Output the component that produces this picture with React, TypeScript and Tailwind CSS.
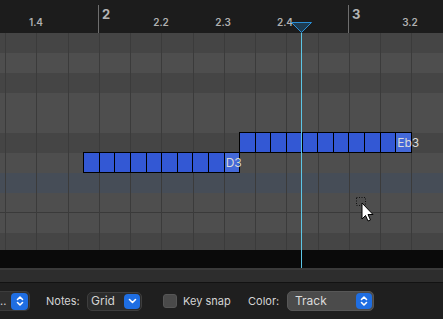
import React from 'react';

const rows = [
	{ h: 20, bg: 'bg-[#454545]' },
	{ h: 20, bg: 'bg-[#4e4e4e]' },
	{ h: 20, bg: 'bg-[#454545]' },
	{ h: 20, bg: 'bg-[#4e4e4e]' },
	{ h: 20, bg: 'bg-[#4e4e4e]' },
	{ h: 20, bg: 'bg-[#454545]' },
	{ h: 20, bg: 'bg-[#4e4e4e]' },
	{ h: 20, bg: 'bg-[#464d57]' },
	{ h: 20, bg: 'bg-[#4e4e4e] border-b border-[#3a3a3a]' },
	{ h: 20, bg: 'bg-[#4e4e4e]' },
	{ h: 17, bg: 'bg-[#454545]' },
];

const gridLines = Array.from({ length: 15 }, (_, i) => 5 + i * 31.25);
const step = 15.625;

const rulerLabels = [
	{ x: 36, t: '1.4' },
	{ x: 161, t: '2.2' },
	{ x: 223, t: '2.3' },
	{ x: 285, t: '2.4' },
	{ x: 410, t: '3.2' },
];

function Note({ start, count, top, label }: { start: number; count: number; top: number; label: string }) {
	return (
		<>
			{Array.from({ length: count }, (_, i) => (
				<div
					key={i}
					className={`absolute h-[21px] border border-black ${i === count - 1 ? 'bg-[#4469d8]' : 'bg-[#3358d4]'}`}
					style={{ left: start + i * step, top, width: step + 1 }}
				/>
			))}
			<span
				className="absolute text-[12px] leading-none text-[#dadada]"
				style={{ left: start + (count - 1) * step + 2, top: top + 5 }}
			>
				{label}
			</span>
		</>
	);
}

function Stepper({ className }: { className: string }) {
	return (
		<div className={`flex items-center justify-center rounded-[4px] bg-[#1f6ee2] ${className}`}>
			<svg width="8" height="12" viewBox="0 0 8 12" fill="none" stroke="white" strokeWidth="1.6" strokeLinecap="round" strokeLinejoin="round">
				<path d="M1.5 4.5 L4 2 L6.5 4.5" />
				<path d="M1.5 7.5 L4 10 L6.5 7.5" />
			</svg>
		</div>
	);
}

export default function App() {
	return (
		<div className="w-[443px] h-[319px] flex flex-col bg-[#1c1c1c] overflow-hidden" style={{ fontFamily: 'Inter, "Liberation Sans", sans-serif' }}>
			{/* ruler */}
			<div className="relative h-[33px] shrink-0 bg-[#1c1c1c]">
				<div className="absolute left-[98px] top-[5px] bottom-0 w-px bg-[#6e6e6e]" />
				<div className="absolute left-[348px] top-[5px] bottom-0 w-px bg-[#6e6e6e]" />
				<span className="absolute left-[102px] top-[8px] text-[13px] font-bold leading-none text-[#b4b4b4]">2</span>
				<span className="absolute left-[352px] top-[8px] text-[13px] font-bold leading-none text-[#b4b4b4]">3</span>
				{rulerLabels.map((l) => (
					<span
						key={l.t}
						className="absolute top-[17px] w-[30px] -translate-x-1/2 text-center text-[10px] font-semibold leading-none text-[#b0b0b0]"
						style={{ left: l.x }}
					>
						{l.t}
					</span>
				))}
				<svg className="absolute left-[291px] top-[22px]" width="21" height="11" viewBox="0 0 21 11">
					<path d="M0.5 0.5 H20.5 L10.5 10.5 Z" fill="#1d3c52" stroke="#2a8fd6" strokeWidth="1" />
				</svg>
			</div>

			{/* grid + black strip */}
			<div className="relative flex flex-col shrink-0">
				<div className="relative flex flex-col h-[217px]">
					{rows.map((r, i) => (
						<div key={i} className={`shrink-0 ${r.bg}`} style={{ height: r.h }} />
					))}
					{gridLines.map((x) => (
						<div
							key={x}
							className={`absolute top-0 bottom-0 w-px ${Math.round(x) === 98 || Math.round(x) === 348 ? 'bg-[#343434]' : 'bg-[#3b3b3b]'}`}
							style={{ left: Math.round(x) }}
						/>
					))}
					<Note start={239} count={11} top={99} label="Eb3" />
					<Note start={83} count={10} top={119} label="D3" />
					{/* pencil/select cursor */}
					<svg className="absolute left-[355px] top-[163px]" width="20" height="28" viewBox="0 0 20 28">
						<rect x="1.5" y="1.5" width="9" height="8" fill="none" stroke="#111" strokeWidth="1" strokeDasharray="1 1.5" />
						<path d="M7 7 L7 23 L10.5 19.5 L13 25 L15.5 24 L13 18.5 L18 18.5 Z" fill="white" stroke="black" strokeWidth="1" strokeLinejoin="round" />
					</svg>
				</div>
				<div className="h-[18px] bg-[#0a0a0a]" />
				<div className="absolute left-[301px] top-0 bottom-0 w-px bg-[#5cc6e6]" />
			</div>

			<div className="h-[2px] bg-[#3a3a3a] shrink-0" />
			<div className="h-[12px] bg-[#2d2d2d] shrink-0" />
			<div className="h-px bg-[#121212] shrink-0" />

			{/* toolbar */}
			<div className="flex-1 flex items-center bg-[#1f1f1f] text-[11px] text-[#d4d4d4]">
				<div className="flex items-center h-[20px] w-[30px] rounded-r-[5px] bg-[#2f2f2f] border border-l-0 border-[#3c3c3c]">
					<span className="w-[11px] leading-none text-[#cfcfcf]">..</span>
					<Stepper className="w-[17px] h-[17px]" />
				</div>
				<span className="ml-[16px] w-[32px]">Notes:</span>
				<div className="ml-[9px] flex items-center justify-between h-[19px] w-[55px] rounded-[5px] bg-[#2b2b2b] border border-[#3e3e3e] pl-[3px] pr-[1px]">
					<span className="text-[12px]">Grid</span>
					<div className="flex items-center justify-center w-[16px] h-[15px] rounded-[4px] bg-[#1f6ee2]">
						<svg width="9" height="6" viewBox="0 0 9 6" fill="none" stroke="white" strokeWidth="1.6" strokeLinecap="round" strokeLinejoin="round">
							<path d="M1.5 1.5 L4.5 4.5 L7.5 1.5" />
						</svg>
					</div>
				</div>
				<div className="ml-[21px] w-[14px] h-[14px] rounded-[3px] bg-[#4a4a4a] border border-[#565656]" />
				<span className="ml-[6px] w-[44px] whitespace-nowrap">Key snap</span>
				<span className="ml-[21px] w-[30px]">Color:</span>
				<div className="ml-[9px] flex items-center justify-between h-[20px] w-[87px] rounded-[5px] bg-[#4b4b4b] border border-[#575757] pl-[7px] pr-[1px]">
					<span className="text-[12px] text-[#dcdcdc]">Track</span>
					<Stepper className="w-[16px] h-[16px]" />
				</div>
			</div>
		</div>
	);
}
